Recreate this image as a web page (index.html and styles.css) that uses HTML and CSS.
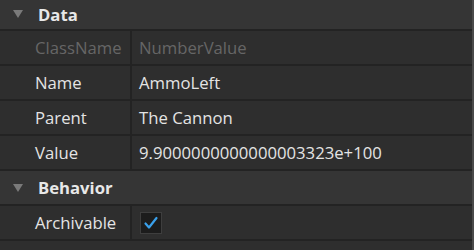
FILE: index.html
```html
<!DOCTYPE html>
<html>
<head>
<meta charset="utf-8">
<link rel="stylesheet" href="styles.css">
</head>
<body>
<div class="panel">
  <div class="section first">
    <span class="caret"></span><span class="title">Data</span>
  </div>
  <div class="row dim">
    <div class="label">ClassName</div>
    <div class="value">NumberValue</div>
  </div>
  <div class="row">
    <div class="label">Name</div>
    <div class="value">AmmoLeft</div>
  </div>
  <div class="row">
    <div class="label">Parent</div>
    <div class="value">The Cannon</div>
  </div>
  <div class="row">
    <div class="label">Value</div>
    <div class="value">9.9000000000000003323e+100</div>
  </div>
  <div class="section">
    <span class="caret"></span><span class="title">Behavior</span>
  </div>
  <div class="row">
    <div class="label">Archivable</div>
    <div class="value">
      <span class="check">
        <svg width="16" height="14" viewBox="0 0 16 14"><path d="M2.5 7.5 L6 11.5 L13.5 2" fill="none" stroke="#3aa0ea" stroke-width="2.2" stroke-linecap="round" stroke-linejoin="round"/></svg>
      </span>
    </div>
  </div>
  <div class="row filler"></div>
</div>
</body>
</html>
```
FILE: styles.css
```css
html, body {
  margin: 0;
  padding: 0;
  background: #2e2e2e;
}
.panel {
  width: 472px;
  height: 250px;
  overflow: hidden;
  border-right: 2px solid #4a4a4a;
  font-family: "Open Sans", "Liberation Sans", sans-serif;
  font-size: 16.7px;
  color: #e4e4e4;
}
.section {
  background: #353535;
  border-bottom: 2px solid #232323;
  display: flex;
  align-items: center;
  box-sizing: border-box;
  height: 35px;
}
.section.first {
  height: 31px;
  padding-bottom: 1px;
}
.caret {
  width: 0;
  height: 0;
  border-left: 5px solid transparent;
  border-right: 5px solid transparent;
  border-top: 8px solid #7a7a7a;
  margin-left: 13px;
  margin-right: 15px;
}
.title {
  font-weight: 700;
  color: #e8e8e8;
}
.row {
  display: grid;
  grid-template-columns: 132px 1fr;
  height: 35px;
  box-sizing: border-box;
  border-bottom: 2px solid #232323;
  background: #2e2e2e;
}
.label {
  padding-left: 35px;
  display: flex;
  align-items: center;
  border-right: 2px solid #232323;
  white-space: nowrap;
}
.value {
  padding-left: 7px;
  display: flex;
  align-items: center;
  white-space: nowrap;
}
.dim .label, .dim .value {
  color: #666666;
}
.check {
  margin-left: 1px;
  background: #1c1c1c;
  border: 1px solid #3e3e3e;
  display: flex;
  align-items: center;
  justify-content: center;
  box-sizing: border-box;
  width: 22px;
  height: 22px;
}
.filler {
  border-bottom: none;
}
```
